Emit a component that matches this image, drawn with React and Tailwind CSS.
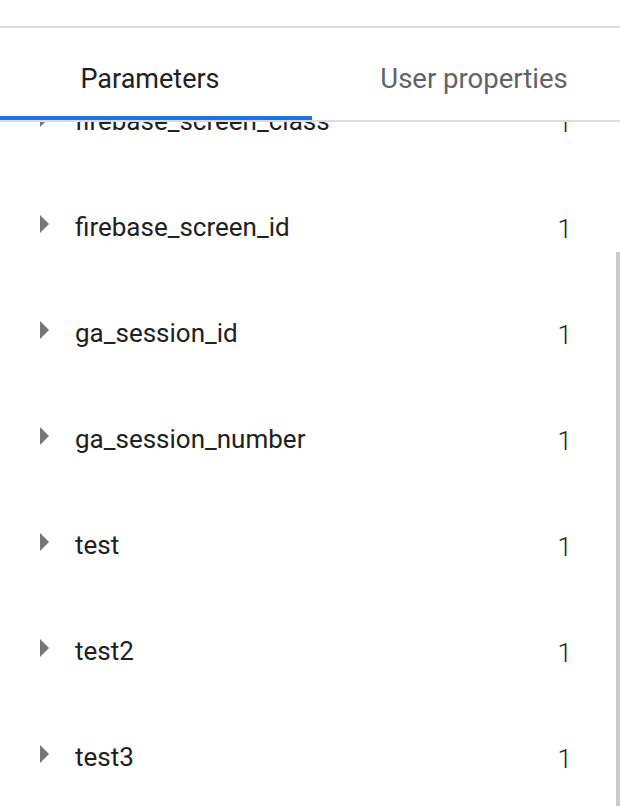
const rows = [
  { name: "firebase_screen_class", count: 1 },
  { name: "firebase_screen_id", count: 1 },
  { name: "ga_session_id", count: 1 },
  { name: "ga_session_number", count: 1 },
  { name: "test", count: 1 },
  { name: "test2", count: 1 },
  { name: "test3", count: 1 },
];

function Caret() {
  return (
    <svg width="9" height="18" viewBox="0 0 9 18" className="mb-[6px] shrink-0">
      <path d="M0 0 L9 9 L0 18 Z" fill="#757575" />
    </svg>
  );
}

function App() {
  return (
    <div className="relative h-[806px] w-[620px] overflow-hidden bg-white font-['Roboto',sans-serif]">
      <div className="h-[26px]" />
      <div className="h-[2px] bg-[#dadce0]" />

      <div className="relative z-10 bg-white">
        <div className="-ml-[12px] flex h-[92px]">
          <div className="flex w-[324px] shrink-0 flex-col">
            <div className="flex-1 pt-[35px] text-center text-[27px] leading-[32px] text-[#202124]">Parameters</div>
            <div className="h-[4px] bg-[#1a73e8]" />
          </div>
          <div className="w-[324px] shrink-0 pt-[35px] text-center text-[27.5px] leading-[32px] text-[#5f6368]">
            User properties
          </div>
        </div>
        <div className="h-[2px] bg-[#dadce0]" />
      </div>

      <div className="-mt-[54px]">
        {rows.map((row) => (
          <div key={row.name} className="flex h-[106px] items-center pl-[40px] pr-[48px]">
            <Caret />
            <span className="ml-[26px] flex-1 text-[26px] leading-[32px] text-[#212121]">{row.name}</span>
            <span className="mt-[4px] text-[26px] font-light leading-[32px] text-[#212121]">{row.count}</span>
          </div>
        ))}
      </div>

      <div className="absolute bottom-0 right-0 top-[252px] w-[4px] bg-[#cbcbcb]" />
    </div>
  );
}

export default App;
